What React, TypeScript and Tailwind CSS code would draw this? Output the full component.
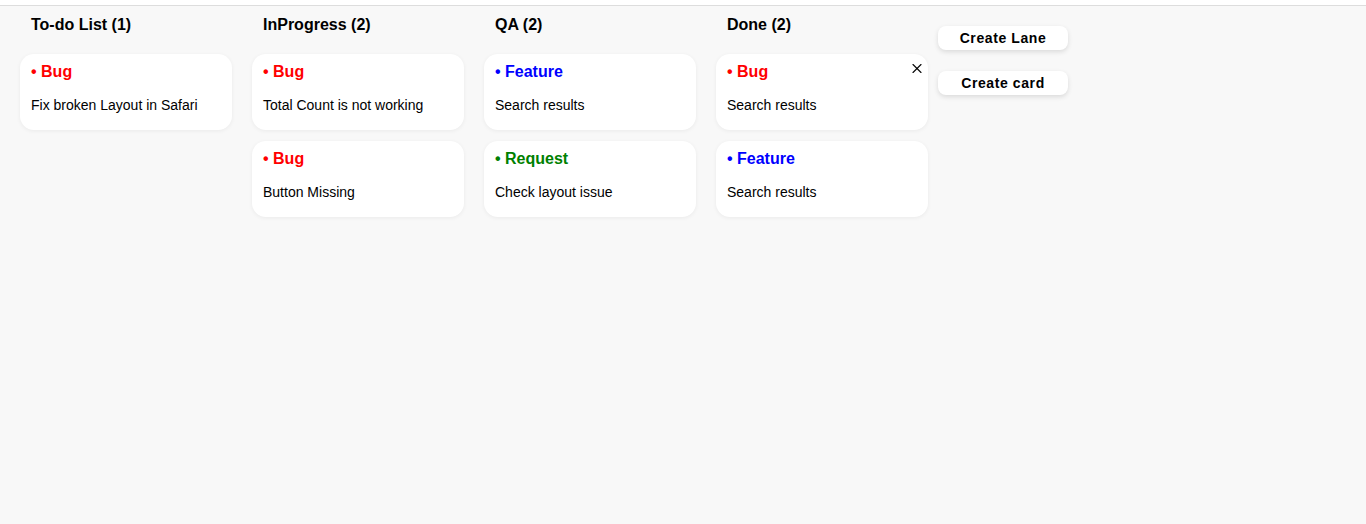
import { X } from 'lucide-react';

type Card = { id: string; tag: 'Bug' | 'Feature' | 'Request'; text: string; closable?: boolean };
type Lane = { title: string; cards: Card[] };

const tagColor: Record<Card['tag'], string> = {
  Bug: 'text-[#ff0000]',
  Feature: 'text-[#0000ff]',
  Request: 'text-[#008000]',
};

const lanes: Lane[] = [
  { title: 'To-do List', cards: [{ id: '1', tag: 'Bug', text: 'Fix broken Layout in Safari' }] },
  {
    title: 'InProgress',
    cards: [
      { id: '2', tag: 'Bug', text: 'Total Count is not working' },
      { id: '3', tag: 'Bug', text: 'Button Missing' },
    ],
  },
  {
    title: 'QA',
    cards: [
      { id: '4', tag: 'Feature', text: 'Search results' },
      { id: '5', tag: 'Request', text: 'Check layout issue' },
    ],
  },
  {
    title: 'Done',
    cards: [
      { id: '6', tag: 'Bug', text: 'Search results', closable: true },
      { id: '7', tag: 'Feature', text: 'Search results' },
    ],
  },
];

function TaskCard({ card }: { card: Card }) {
  return (
    <div className="relative w-[212px] rounded-[14px] bg-white px-[11px] pt-[9px] pb-[17px] shadow-[0_1px_4px_rgba(0,0,0,0.06)]">
      <div className={`text-[16px] font-bold leading-[18px] ${tagColor[card.tag]}`}>• {card.tag}</div>
      <div className="mt-[16px] text-[14px] leading-[16px] text-black">{card.text}</div>
      {card.closable && (
        <button className="absolute right-[3px] top-[6px] flex h-[16px] w-[16px] items-center justify-center text-black">
          <X size={17} strokeWidth={1.7} />
        </button>
      )}
    </div>
  );
}

export default function App() {
  return (
    <div className="min-h-[524px] bg-white font-['Liberation_Sans',Arial,sans-serif]">
      <div className="h-[5px] bg-white" />
      <div className="flex min-h-[519px] gap-[20px] border-t border-[#dddddd] bg-[#f8f8f8] px-[20px]">
        {lanes.map((lane) => (
          <div key={lane.title} className="w-[212px]">
            <h2 className="mt-[10px] mb-[20px] pl-[11px] text-[16px] font-bold leading-[18px] text-black">
              {lane.title} ({lane.cards.length})
            </h2>
            <div className="flex flex-col gap-[11px]">
              {lane.cards.map((c) => (
                <TaskCard key={c.id} card={c} />
              ))}
            </div>
          </div>
        ))}
        <div className="-ml-[10px] flex flex-col gap-[21px] pt-[20px]">
          <button className="h-[24px] w-[130px] rounded-[8px] bg-white text-[14px] font-bold leading-[24px] tracking-[0.6px] text-black shadow-[0_2px_5px_rgba(0,0,0,0.12)]">
            Create Lane
          </button>
          <button className="h-[24px] w-[130px] rounded-[8px] bg-white text-[14px] font-bold leading-[24px] tracking-[0.6px] text-black shadow-[0_2px_5px_rgba(0,0,0,0.12)]">
            Create card
          </button>
        </div>
      </div>
    </div>
  );
}
